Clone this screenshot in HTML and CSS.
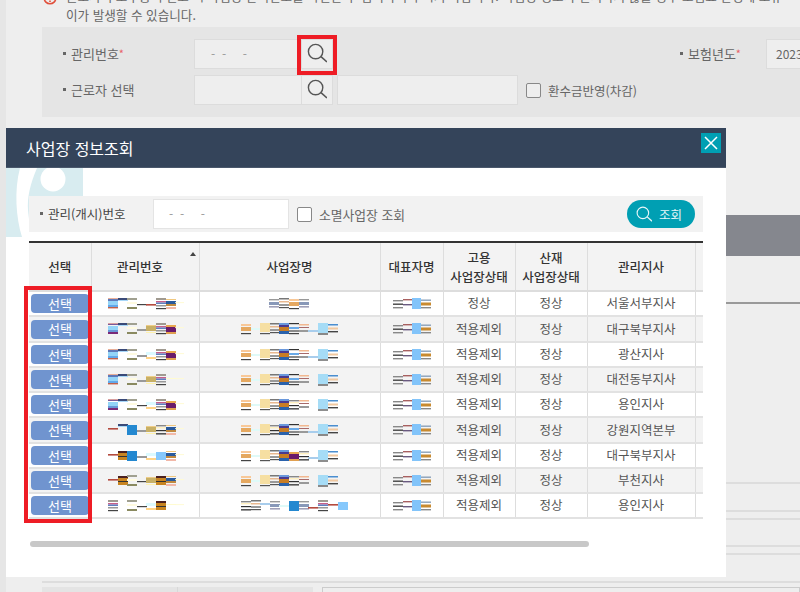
FILE: index.html
```html
<!DOCTYPE html>
<html lang="ko">
<head>
<meta charset="utf-8">
<title>사업장 정보조회</title>
<link rel="stylesheet" href="styles.css">
</head>
<body>
<svg class="defs" aria-hidden="true">
  <symbol id="a" viewBox="0 0 10 12"><rect y="0" width="10" height="1" fill="#e8b09a"/><rect y="1" width="10" height="2" fill="#5f78b8"/><rect y="3" width="10" height="4" fill="#93d4f8"/><rect y="7" width="10" height="2" fill="#62a8ea"/><rect y="9" width="10" height="1.4" fill="#c0604a"/></symbol>
  <symbol id="p" viewBox="0 0 10 12"><rect y="0" width="10" height="1" fill="#d8a0a0"/><rect y="1" width="10" height="1" fill="#7a5a9a"/><rect y="3" width="10" height="4" fill="#93d4f8"/><rect y="7" width="10" height="2" fill="#6a98d8"/><rect y="9" width="10" height="2" fill="#7a2a78"/></symbol>
  <symbol id="b" viewBox="0 0 10 12"><rect y="0" width="10" height="2" fill="#3a4a78"/><rect y="2" width="10" height="1" fill="#a8d8f8"/></symbol>
  <symbol id="c" viewBox="0 0 10 12"><rect y="0" width="10" height="2" fill="#a0a090"/><rect y="4" width="10" height="2" fill="#fffbe0"/><rect y="9" width="10" height="2" fill="#8a8a60"/></symbol>
  <symbol id="d" viewBox="0 0 10 12"><rect y="6" width="10" height="1.2" fill="#444"/></symbol>
  <symbol id="e" viewBox="0 0 10 12"><rect y="6" width="10" height="1.6" fill="#b44a3e"/></symbol>
  <symbol id="f" viewBox="0 0 10 12"><rect y="0" width="10" height="2" fill="#a09a90"/><rect y="3" width="10" height="1.5" fill="#c8608a"/><rect y="4.5" width="10" height="1.5" fill="#5f80c0"/><rect y="7" width="10" height="1.5" fill="#999"/><rect y="10" width="10" height="1.2" fill="#444"/></symbol>
  <symbol id="g" viewBox="0 0 10 12"><rect y="1" width="10" height="1" fill="#f0c880"/><rect y="3" width="10" height="3" fill="#2a5a9c"/><rect y="6" width="10" height="2" fill="#c08a40"/><rect y="9" width="10" height="2" fill="#f2b8a8"/></symbol>
  <symbol id="h" viewBox="0 0 10 12"><rect y="4" width="10" height="1" fill="#fffbd0"/></symbol>
  <symbol id="i" viewBox="0 0 10 12"><rect y="6" width="10" height="2" fill="#999"/></symbol>
  <symbol id="j" viewBox="0 0 10 12"><rect y="2" width="10" height="1" fill="#eecc88"/><rect y="3" width="10" height="5" fill="#c8b066"/><rect y="9" width="10" height="1" fill="#fff3b0"/></symbol>
  <symbol id="k" viewBox="0 0 10 12"><rect y="2" width="10" height="2" fill="#e8a850"/><rect y="4" width="10" height="5" fill="#6a1a6a"/><rect y="9" width="10" height="2" fill="#e0a050"/></symbol>
  <symbol id="l" viewBox="0 0 10 12"><rect y="1" width="10" height="10" fill="#2488d0"/></symbol>
  <symbol id="m" viewBox="0 0 10 12"><rect y="2" width="10" height="8" fill="#86c8fc"/></symbol>
  <symbol id="n" viewBox="0 0 10 12"><rect y="1" width="10" height="2" fill="#4a2020"/><rect y="3" width="10" height="3" fill="#c88420"/><rect y="6" width="10" height="1" fill="#333"/><rect y="7" width="10" height="3" fill="#c88420"/></symbol>
  <symbol id="q" viewBox="0 0 10 12"><rect y="3" width="10" height="3" fill="#dcfaff"/><rect y="8" width="10" height="2" fill="#ffd488"/></symbol>
  <symbol id="r" viewBox="0 0 10 12"><rect y="1" width="10" height="2" fill="#f8c898"/><rect y="4" width="10" height="4" fill="#e5a860"/><rect y="10" width="10" height="1.2" fill="#444"/></symbol>
  <symbol id="s" viewBox="0 0 10 12"><rect y="5" width="10" height="2" fill="#dffaf8"/></symbol>
  <symbol id="t" viewBox="0 0 10 12"><rect y="0" width="10" height="9" fill="#f6dfa2"/><rect y="10" width="10" height="1.2" fill="#555"/></symbol>
  <symbol id="u" viewBox="0 0 10 12"><rect y="0" width="10" height="1.5" fill="#777"/><rect y="3" width="10" height="1.5" fill="#e8b890"/><rect y="6" width="10" height="2" fill="#999"/><rect y="9" width="10" height="1.2" fill="#555"/></symbol>
  <symbol id="v" viewBox="0 0 10 12"><rect y="0" width="10" height="2" fill="#6a98dc"/><rect y="2" width="10" height="2" fill="#4a3a90"/><rect y="4" width="10" height="4" fill="#c87d25"/><rect y="8" width="10" height="3" fill="#2a62ac"/></symbol>
  <symbol id="w" viewBox="0 0 10 12"><rect y="0" width="10" height="1.2" fill="#333"/><rect y="4" width="10" height="2" fill="#6aaae8"/><rect y="7" width="10" height="2" fill="#8a8a8a"/><rect y="10" width="10" height="1.2" fill="#444"/></symbol>
  <symbol id="x" viewBox="0 0 10 12"><rect y="1" width="10" height="1.5" fill="#f2b890"/><rect y="4" width="10" height="1" fill="#a86a6a"/><rect y="7" width="10" height="2" fill="#999"/></symbol>
  <symbol id="y" viewBox="0 0 10 12"><rect y="7" width="10" height="2" fill="#a8cdec"/></symbol>
  <symbol id="z" viewBox="0 0 10 12"><rect y="0" width="10" height="10" fill="#a6dcf6"/><rect y="10.4" width="10" height="1.2" fill="#444"/></symbol>
  <symbol id="aa" viewBox="0 0 10 12"><rect y="1" width="10" height="1.5" fill="#4a8ed0"/><rect y="4.5" width="10" height="2" fill="#f0c8a0"/><rect y="8" width="10" height="1.4" fill="#444"/></symbol>
  <symbol id="ab" viewBox="0 0 10 12"><rect y="1" width="10" height="1.4" fill="#888"/><rect y="3" width="10" height="1.4" fill="#fff0c0"/><rect y="6" width="10" height="1.2" fill="#333"/><rect y="9" width="10" height="1.6" fill="#555"/></symbol>
  <symbol id="ac" viewBox="0 0 10 12"><rect y="1" width="10" height="1.4" fill="#999"/><rect y="4" width="10" height="3" fill="#8898b8"/><rect y="8" width="10" height="1.6" fill="#a0a0b8"/></symbol>
  <symbol id="rep" viewBox="0 0 38 12"><rect y="2" width="10" height="1.4" fill="#888"/><rect y="5.5" width="10" height="1.4" fill="#444"/><rect y="9" width="10" height="1.4" fill="#888"/><rect x="10" y="1" width="9" height="1.4" fill="#a86060"/><rect x="10" y="6" width="9" height="1.4" fill="#6a5a80"/><rect x="19" y="0" width="9" height="11" fill="#82c4fa"/><rect x="28" y="1.5" width="10" height="1.4" fill="#8aa0b8"/><rect x="28" y="4.5" width="10" height="3" fill="#c88a30"/><rect x="28" y="9" width="10" height="1.4" fill="#888"/></symbol>
  <symbol id="lens" viewBox="0 0 20 20"><circle cx="8.6" cy="8.6" r="7.2" fill="none" stroke="currentColor" stroke-width="1.4"/><path d="M14 13.6 20 19" fill="none" stroke="currentColor" stroke-width="1.6"/></symbol>
</svg>

<div class="page">
  <div class="notice">
    <svg class="notice-icon" viewBox="0 0 14 14"><circle cx="7" cy="7" r="5.8" fill="none" stroke="#e0503c" stroke-width="1.6"/><path d="M7 3.5v4.5M7 9.5v1.4" stroke="#e0503c" stroke-width="1.6"/></svg>
    <p class="notice-text">근로자의 보수총액 신고 시 사업장 관리번호를 확인한 후 입력하여 주시기 바랍니다. 사업장 정보가 일치하지 않을 경우 보험료 산정에 오류<br>이가 발생할 수 있습니다.</p>
  </div>

  <section class="form">
    <div class="form-row">
      <label class="label">관리번호<em>*</em></label>
      <div class="field field-a">- &nbsp;- &nbsp; &nbsp; -</div>
      <button class="lens-btn"><svg class="lens"><use href="#lens"/></svg></button>
      <label class="label label-year">보험년도<em>*</em></label>
      <div class="field field-year">2023</div>
    </div>
    <div class="form-row">
      <label class="label">근로자 선택</label>
      <div class="field field-b"></div>
      <button class="lens-btn lens-btn-joined"><svg class="lens"><use href="#lens"/></svg></button>
      <div class="field field-c"></div>
      <span class="check"></span>
      <span class="check-label">환수금반영(차감)</span>
    </div>
  </section>

  <div class="band"></div>
  <div class="rule"></div>
  <div class="rows">
    <div class="row"></div>
    <div class="row"></div>
    <div class="row"></div>
    <div class="row row-last"><div class="row-head"></div><div class="row-name">상담일</div><div class="row-box"></div></div>
  </div>
</div>

<div class="hl hl-search"></div>

<div class="modal">
  <svg class="watermark" viewBox="0 0 77 72"><path d="M0 0H77V30H23V69H0Z" fill="#d8ecf0"/><path d="M14 0H31C24 16 21 30 22 42C23 52 24 60 28 69H16C10 50 8 22 14 0Z" fill="#fff"/><circle cx="47" cy="11" r="12.5" fill="#fff"/></svg>
  <header class="modal-head">
    <h2 class="modal-title">사업장 정보조회</h2>
    <button class="close"><svg viewBox="0 0 20 20"><path d="M4 4 16 16M16 4 4 16" stroke="#fff" stroke-width="1.5"/></svg></button>
  </header>
  <div class="modal-body">
    <div class="search">
      <label class="label label-search">관리(개시)번호</label>
      <div class="field field-search">- &nbsp;- &nbsp; &nbsp; -</div>
      <span class="check check-white"></span>
      <span class="check-label check-label-wide">소멸사업장 조회</span>
      <button class="go"><svg class="go-lens"><use href="#lens"/></svg>조회</button>
    </div>
    <table class="grid">
      <colgroup><col class="c1"><col class="c2"><col class="c3"><col class="c4"><col class="c5"><col class="c6"><col class="c7"><col class="c8"></colgroup>
      <thead>
        <tr>
          <th>선택</th>
          <th class="sorted"><span class="sort-label">관리번호</span><span class="sort"></span></th>
          <th>사업장명</th>
          <th>대표자명</th>
          <th>고용<br>사업장상태</th>
          <th>산재<br>사업장상태</th>
          <th>관리지사</th>
          <th></th>
        </tr>
      </thead>
      <tbody>
        <tr>
          <td><button class="pick">선택</button></td>
          <td class="left-m"><svg class="mm" viewBox="0 0 76 12"><use href="#a" width="10" height="12"/><use href="#b" x="10" width="10" height="12"/><use href="#c" x="19" width="10" height="12"/><use href="#d" x="29" width="10" height="12"/><use href="#e" x="38" width="10" height="12"/><use href="#f" x="48" width="10" height="12"/><use href="#g" x="58" width="10" height="12"/><use href="#h" x="67" width="9" height="12"/></svg></td>
          <td class="left-n"><svg class="nm" viewBox="0 0 110 12"><use href="#ac" x="28" width="10" height="12"/><use href="#u" x="38" width="10" height="12"/><use href="#r" x="48" width="10" height="12"/><use href="#ac" x="58" width="10" height="12"/></svg></td>
          <td><svg class="rp"><use href="#rep"/></svg></td>
          <td>정상</td><td>정상</td><td>서울서부지사</td><td></td>
        </tr>
        <tr class="tall">
          <td><button class="pick">선택</button></td>
          <td class="left-m"><svg class="mm" viewBox="0 0 76 12"><use href="#p" width="10" height="12"/><use href="#b" x="10" width="10" height="12"/><use href="#c" x="19" width="10" height="12"/><use href="#i" x="29" width="10" height="12"/><use href="#j" x="38" width="10" height="12"/><use href="#f" x="48" width="10" height="12"/><use href="#k" x="58" width="10" height="12"/><use href="#h" x="67" width="9" height="12"/></svg></td>
          <td class="left-n"><svg class="nm" viewBox="0 0 110 12"><use href="#r" width="10" height="12"/><use href="#s" x="10" width="10" height="12"/><use href="#t" x="19" width="10" height="12"/><use href="#u" x="29" width="10" height="12"/><use href="#v" x="38" width="10" height="12"/><use href="#w" x="48" width="10" height="12"/><use href="#x" x="58" width="10" height="12"/><use href="#y" x="67" width="10" height="12"/><use href="#z" x="77" width="10" height="12"/><use href="#aa" x="87" width="10" height="12"/></svg></td>
          <td><svg class="rp"><use href="#rep"/></svg></td>
          <td>적용제외</td><td>정상</td><td>대구북부지사</td><td></td>
        </tr>
        <tr>
          <td><button class="pick">선택</button></td>
          <td class="left-m"><svg class="mm" viewBox="0 0 76 12"><use href="#a" width="10" height="12"/><use href="#b" x="10" width="10" height="12"/><use href="#c" x="19" width="10" height="12"/><use href="#i" x="29" width="10" height="12"/><use href="#q" x="38" width="10" height="12"/><use href="#f" x="48" width="10" height="12"/><use href="#k" x="58" width="10" height="12"/><use href="#h" x="67" width="9" height="12"/></svg></td>
          <td class="left-n"><svg class="nm" viewBox="0 0 110 12"><use href="#r" width="10" height="12"/><use href="#s" x="10" width="10" height="12"/><use href="#t" x="19" width="10" height="12"/><use href="#u" x="29" width="10" height="12"/><use href="#v" x="38" width="10" height="12"/><use href="#w" x="48" width="10" height="12"/><use href="#x" x="58" width="10" height="12"/><use href="#y" x="67" width="10" height="12"/><use href="#z" x="77" width="10" height="12"/><use href="#aa" x="87" width="10" height="12"/></svg></td>
          <td><svg class="rp"><use href="#rep"/></svg></td>
          <td>적용제외</td><td>정상</td><td>광산지사</td><td></td>
        </tr>
        <tr>
          <td><button class="pick">선택</button></td>
          <td class="left-m"><svg class="mm" viewBox="0 0 76 12"><use href="#a" width="10" height="12"/><use href="#b" x="10" width="10" height="12"/><use href="#c" x="19" width="10" height="12"/><use href="#i" x="29" width="10" height="12"/><use href="#j" x="38" width="10" height="12"/><use href="#f" x="48" width="10" height="12"/><use href="#h" x="58" width="10" height="12"/><use href="#h" x="67" width="9" height="12"/></svg></td>
          <td class="left-n"><svg class="nm" viewBox="0 0 110 12"><use href="#r" width="10" height="12"/><use href="#s" x="10" width="10" height="12"/><use href="#t" x="19" width="10" height="12"/><use href="#u" x="29" width="10" height="12"/><use href="#v" x="38" width="10" height="12"/><use href="#w" x="48" width="10" height="12"/><use href="#x" x="58" width="10" height="12"/><use href="#z" x="77" width="10" height="12"/><use href="#aa" x="87" width="10" height="12"/></svg></td>
          <td><svg class="rp"><use href="#rep"/></svg></td>
          <td>적용제외</td><td>정상</td><td>대전동부지사</td><td></td>
        </tr>
        <tr>
          <td><button class="pick">선택</button></td>
          <td class="left-m"><svg class="mm" viewBox="0 0 76 12"><use href="#p" width="10" height="12"/><use href="#b" x="10" width="10" height="12"/><use href="#c" x="19" width="10" height="12"/><use href="#d" x="29" width="10" height="12"/><use href="#q" x="38" width="10" height="12"/><use href="#f" x="48" width="10" height="12"/><use href="#k" x="58" width="10" height="12"/><use href="#h" x="67" width="9" height="12"/></svg></td>
          <td class="left-n"><svg class="nm" viewBox="0 0 110 12"><use href="#r" width="10" height="12"/><use href="#s" x="10" width="10" height="12"/><use href="#t" x="19" width="10" height="12"/><use href="#u" x="29" width="10" height="12"/><use href="#v" x="38" width="10" height="12"/><use href="#ab" x="48" width="10" height="12"/><use href="#x" x="58" width="10" height="12"/><use href="#z" x="77" width="10" height="12"/><use href="#aa" x="87" width="10" height="12"/></svg></td>
          <td><svg class="rp"><use href="#rep"/></svg></td>
          <td>적용제외</td><td>정상</td><td>용인지사</td><td></td>
        </tr>
        <tr class="tall">
          <td><button class="pick">선택</button></td>
          <td class="left-m"><svg class="mm" viewBox="0 0 76 12"><use href="#e" y="-2" width="10" height="12"/><use href="#b" x="10" width="10" height="12"/><use href="#l" x="19" width="10" height="12"/><use href="#i" x="29" width="10" height="12"/><use href="#j" x="38" width="10" height="12"/><use href="#ab" x="48" width="10" height="12"/><use href="#g" x="58" width="10" height="12"/><use href="#h" x="67" width="9" height="12"/></svg></td>
          <td class="left-n"><svg class="nm" viewBox="0 0 110 12"><use href="#r" width="10" height="12"/><use href="#s" x="10" width="10" height="12"/><use href="#t" x="19" width="10" height="12"/><use href="#ab" x="29" width="10" height="12"/><use href="#v" x="38" width="10" height="12"/><use href="#w" x="48" width="10" height="12"/><use href="#x" x="58" width="10" height="12"/><use href="#y" x="67" width="10" height="12"/><use href="#z" x="77" width="10" height="12"/><use href="#aa" x="87" width="10" height="12"/></svg></td>
          <td><svg class="rp"><use href="#rep"/></svg></td>
          <td>적용제외</td><td>정상</td><td>강원지역본부</td><td></td>
        </tr>
        <tr>
          <td><button class="pick">선택</button></td>
          <td class="left-m"><svg class="mm" viewBox="0 0 76 12"><use href="#e" y="-2" width="10" height="12"/><use href="#n" x="10" width="10" height="12"/><use href="#l" x="19" width="10" height="12"/><use href="#i" x="29" width="10" height="12"/><use href="#q" x="38" width="10" height="12"/><use href="#m" x="48" width="10" height="12"/><use href="#g" x="58" width="10" height="12"/><use href="#h" x="67" width="9" height="12"/></svg></td>
          <td class="left-n"><svg class="nm" viewBox="0 0 110 12"><use href="#r" width="10" height="12"/><use href="#s" x="10" width="10" height="12"/><use href="#t" x="19" width="10" height="12"/><use href="#u" x="29" width="10" height="12"/><use href="#v" x="38" width="10" height="12"/><use href="#k" x="48" width="10" height="12"/><use href="#ab" x="58" width="10" height="12"/><use href="#y" x="67" width="10" height="12"/><use href="#z" x="77" width="10" height="12"/><use href="#aa" x="87" width="10" height="12"/></svg></td>
          <td><svg class="rp"><use href="#rep"/></svg></td>
          <td>적용제외</td><td>정상</td><td>대구북부지사</td><td></td>
        </tr>
        <tr>
          <td><button class="pick">선택</button></td>
          <td class="left-m"><svg class="mm" viewBox="0 0 76 12"><use href="#e" y="-2" width="10" height="12"/><use href="#n" x="10" width="10" height="12"/><use href="#c" x="19" width="10" height="12"/><use href="#d" x="29" width="10" height="12"/><use href="#j" x="38" width="10" height="12"/><use href="#n" x="48" width="10" height="12"/><use href="#g" x="58" width="10" height="12"/><use href="#h" x="67" width="9" height="12"/></svg></td>
          <td class="left-n"><svg class="nm" viewBox="0 0 110 12"><use href="#r" width="10" height="12"/><use href="#s" x="10" width="10" height="12"/><use href="#t" x="19" width="10" height="12"/><use href="#u" x="29" width="10" height="12"/><use href="#v" x="38" width="10" height="12"/><use href="#ab" x="48" width="10" height="12"/><use href="#x" x="58" width="10" height="12"/><use href="#z" x="77" width="10" height="12"/><use href="#aa" x="87" width="10" height="12"/></svg></td>
          <td><svg class="rp"><use href="#rep"/></svg></td>
          <td>적용제외</td><td>정상</td><td>부천지사</td><td></td>
        </tr>
        <tr>
          <td><button class="pick">선택</button></td>
          <td class="left-m"><svg class="mm" viewBox="0 0 76 12"><use href="#f" width="10" height="12"/><use href="#c" x="19" width="10" height="12"/><use href="#d" x="29" width="10" height="12"/><use href="#q" x="38" width="10" height="12"/><use href="#n" x="48" width="10" height="12"/><use href="#h" x="58" width="10" height="12"/><use href="#h" x="67" width="9" height="12"/></svg></td>
          <td class="left-n"><svg class="nm" viewBox="0 0 110 12"><use href="#ab" width="10" height="12"/><use href="#u" x="10" width="10" height="12"/><use href="#y" x="19" y="-4" width="10" height="12"/><use href="#ac" x="29" width="10" height="12"/><use href="#s" x="38" width="10" height="12"/><use href="#l" x="48" width="10" height="12"/><use href="#ac" x="58" width="10" height="12"/><use href="#e" x="67" y="1" width="10" height="12"/><use href="#f" x="77" width="10" height="12"/><use href="#e" x="87" y="-2" width="10" height="12"/><use href="#m" x="97" width="10" height="12"/></svg></td>
          <td><svg class="rp"><use href="#rep"/></svg></td>
          <td>적용제외</td><td>정상</td><td>용인지사</td><td></td>
        </tr>
      </tbody>
    </table>
    <div class="scroll"></div>
  </div>
  <div class="hl hl-pick"></div>
</div>
</body>
</html>
```
FILE: styles.css
```css
* { box-sizing: border-box; }
html, body { margin: 0; height: 592px; overflow: hidden; }
body {
  background: #eee;
  color: #555;
  font-family: "Noto Sans CJK KR", "Noto Sans", sans-serif;
  font-size: 13px;
  position: relative;
}
.defs { width: 0; height: 0; position: absolute; }
.page { border-left: 6px solid #e6e6e6; height: 592px; overflow: hidden; }

.notice { height: 27px; display: flex; padding-left: 37px; position: relative; }
.notice-icon { width: 14px; height: 14px; margin-top: -9px; flex: none; }
.notice-text { margin: -14px 0 0 9px; font-size: 12.6px; line-height: 19px; white-space: nowrap; color: #666; }

.form { margin-left: 36px; height: 90px; background: #e5e5e5; padding-top: 12px; }
.form-row { display: flex; align-items: center; height: 30px; margin-bottom: 6px; padding-left: 21px; }
.label { width: 131px; flex: none; font-size: 13px; color: #666; display: flex; align-items: center; padding-bottom: 2px; }
.label::before { content: ""; width: 3px; height: 3px; background: #666; margin-right: 5px; flex: none; }
.label em { color: #e8626a; font-style: normal; font-size: 11px; }
.field { height: 30px; background: #eee; border: 1px solid #dcdcdc; color: #999; font-size: 12px; line-height: 28px; flex: none; }
.field-a { width: 104px; padding-left: 16px; }
.field-b { width: 107px; border-right: 0; }
.field-c { width: 181px; margin-left: 4px; }
.field-year { width: 60px; padding-left: 9px; color: #666; margin-left: auto; }
.lens-btn { width: 32px; height: 30px; padding: 0 0 0 5px; margin: 0 0 0 3px; background: #eee; border: 1px solid #dcdcdc; color: #555; display: flex; align-items: center; flex: none; }
.lens-btn-joined { margin-left: 0; }
.lens { width: 20px; height: 20px; margin-top: -2px; }
.label-year { width: 86px; margin-left: 347px; }
.check { width: 15px; height: 15px; border: 1px solid #888; border-radius: 2px; background: #eee; margin-left: 8px; flex: none; }
.check-label { margin-left: 7px; font-size: 12.5px; color: #666; white-space: nowrap; }
.check-label-wide { font-size: 12.8px; }

.band { margin-top: 98px; height: 41px; background: #85878e; }
.rule { margin-top: 46px; height: 2px; background: #999; }
.rows { margin-top: 178px; margin-left: 36px; }
.row { height: 29.5px; border-top: 2px solid #ddd; border-bottom: 2px solid #ddd; margin-bottom: 6px; }
.row-last { display: flex; border-top: 0; height: 32px; margin-top: -2px; }
.row-head { width: 136px; background: #e4e4e4; border-right: 1px solid #d8d8d8; }
.row-name { width: 135px; background: #e4e4e4; padding-left: 10px; line-height: 30px; }
.row-box { margin-left: 9px; flex: 1; border: 1px solid #ccc; height: 30px; }

.modal { position: absolute; left: 6px; top: 128px; width: 720px; height: 449px; background: #fff; }
.watermark { position: absolute; left: 0; top: 40px; width: 77px; height: 72px; }
.modal-head { height: 40px; background: #34445a; padding: 0 5px 0 20px; display: flex; justify-content: space-between; position: relative; border-bottom: 1px solid #4a586c; }
.modal-title { margin: 0; font-size: 16px; font-weight: 400; color: #fff; line-height: 41px; }
.close { width: 20px; height: 20px; margin-top: 5px; padding: 0; border: 0; background: #009fb3; display: block; }
.close svg { width: 20px; height: 20px; display: block; }
.modal-body { padding: 28px 23px 0; position: relative; }
.search { height: 36px; background: #f2f2f2; display: flex; align-items: center; padding-left: 11px; margin-bottom: 9px; }
.label-search { width: 113px; font-size: 12.5px; color: #444; }
.field-search { width: 136px; background: #fff; border-color: #e4e4e4; padding-left: 15px; }
.check-white { background: #fff; margin-left: 8px; }
.go { margin-left: auto; margin-right: 8px; width: 68px; height: 28px; border: 0; border-radius: 14px; background: #009fb3; color: #e6f6f8; font: inherit; font-size: 12.5px; display: flex; align-items: center; padding: 0 0 0 9px; gap: 7px; }
.go-lens { width: 16px; height: 16px; }

.grid { width: 674px; table-layout: fixed; border-collapse: collapse; border-top: 2px solid #333; border-bottom: 1px solid #ddd; }
.c1 { width: 62px; } .c2 { width: 108px; } .c3 { width: 181px; } .c4 { width: 63px; }
.c5 { width: 72px; } .c6 { width: 72px; } .c7 { width: 108px; } .c8 { width: 8px; }
.grid th { height: 49px; background: #f3f3f3; border-right: 1px solid #ddd; border-bottom: 2px solid #ddd; font-size: 12.5px; font-weight: 500; color: #333; line-height: 19px; padding: 0; }
.grid th:last-child, .grid td:last-child { border-right: 0; }
.grid td { height: 25px; padding: 0; text-align: center; font-size: 12.5px; color: #555; border-right: 1px solid #ddd; border-bottom: 2px solid #e2e2e2; line-height: 1; }
.grid .tall td { height: 26px; }
.grid td:first-child { border-right: 0; }
.grid tbody tr:nth-child(even) td { background: #f3f3f3; }
.grid td svg { display: block; }
.sorted { position: relative; }
.sort-label { margin-right: 10px; }
.sort { position: absolute; right: 3px; top: 9px; border: 3px solid transparent; border-top: 0; border-bottom: 4px solid #444; }
.pick { display: block; width: 58px; height: 19px; margin: 0 0 0 2px; padding: 0; border: 0; border-radius: 4px; background: #7094cf; color: #fff; font: inherit; font-size: 13px; line-height: 18px; }
.left-m { padding-left: 17px !important; }
.left-n { padding-left: 41px !important; }
.mm { width: 76px; height: 12px; }
.nm { width: 110px; height: 12px; }
.rp { width: 38px; height: 12px; margin: 0 auto; }
.scroll { margin: 22px 0 0 1px; width: 559px; height: 6px; border-radius: 3px; background: #c8c8c8; }

.hl { position: absolute; border-style: solid; border-color: #ee1c25; }
.hl-search { left: 297px; top: 35px; width: 40px; height: 40px; border-width: 4.5px; }
.hl-pick { left: 18px; top: 158px; width: 68px; height: 237px; border-width: 4.5px; }
```
